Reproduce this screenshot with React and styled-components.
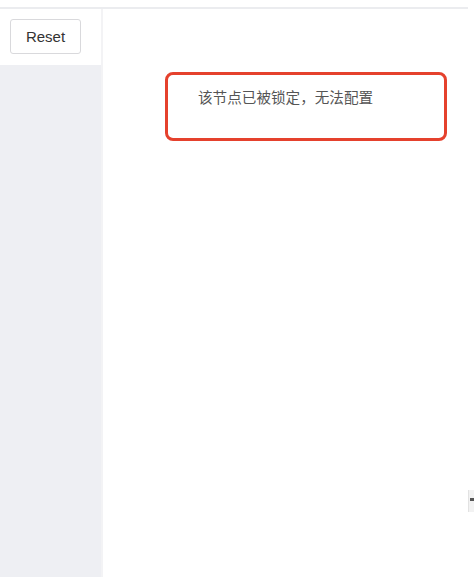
import React from "react";
import styled, { createGlobalStyle } from "styled-components";

const Global = createGlobalStyle`
  html, body { margin: 0; padding: 0; background: #fff; }
  body { font-family: "Helvetica Neue", "Liberation Sans", "Noto Sans CJK SC", sans-serif; }
`;

const Page = styled.div`
  width: 474px;
  height: 579px;
  display: flex;
  flex-direction: column;
  overflow: hidden;
  position: relative;
`;

const TopRule = styled.div`
  height: 7px;
  border-bottom: 2px solid #ebecef;
  margin-right: 6px;
  flex: none;
`;

const Body = styled.div`
  flex: 1;
  display: flex;
  min-height: 0;
`;

const Sidebar = styled.aside`
  width: 101px;
  display: flex;
  flex-direction: column;
  border-right: 2px solid #f3f3f5;
  margin-bottom: 2px;
`;

const Toolbar = styled.div`
  height: 56px;
  background: #fff;
  padding: 10px 0 0 10px;
  box-sizing: border-box;
`;

const Button = styled.button`
  width: 71px;
  height: 35px;
  border: 1px solid #d9d9dc;
  border-radius: 3px;
  background: #fff;
  font-family: "Helvetica Neue", "Liberation Sans", sans-serif;
  font-size: 15px;
  color: #333;
  padding: 0;
`;

const SideFill = styled.div`
  flex: 1;
  background: #eeeff3;
`;

const Main = styled.main`
  flex: 1;
  padding: 63px 0 0 62px;
  position: relative;
`;

const Notice = styled.div`
  width: 276px;
  height: 63px;
  border: 3px solid #e5412d;
  border-radius: 8px;
  box-sizing: content-box;
  padding: 0;
`;

const NoticeText = styled.p`
  margin: 0;
  padding: 12px 0 0 30px;
  font-family: "Noto Sans CJK SC", sans-serif;
  font-size: 14.6px;
  color: #555;
  line-height: 20px;
`;

const ScrollTab = styled.div`
  position: absolute;
  right: 0;
  top: 490px;
  width: 5px;
  height: 22px;
  background: #f2f2f2;
  border-left: 1px solid #e2e2e2;
  &::after {
    content: "";
    position: absolute;
    left: 1px;
    top: 8px;
    width: 4px;
    height: 3px;
    background: #555;
  }
`;

export default function App() {
  return (
    <Page>
      <Global />
      <TopRule />
      <Body>
        <Sidebar>
          <Toolbar>
            <Button>Reset</Button>
          </Toolbar>
          <SideFill />
        </Sidebar>
        <Main>
          <Notice>
            <NoticeText>该节点已被锁定，无法配置</NoticeText>
          </Notice>
        </Main>
      </Body>
      <ScrollTab />
    </Page>
  );
}
